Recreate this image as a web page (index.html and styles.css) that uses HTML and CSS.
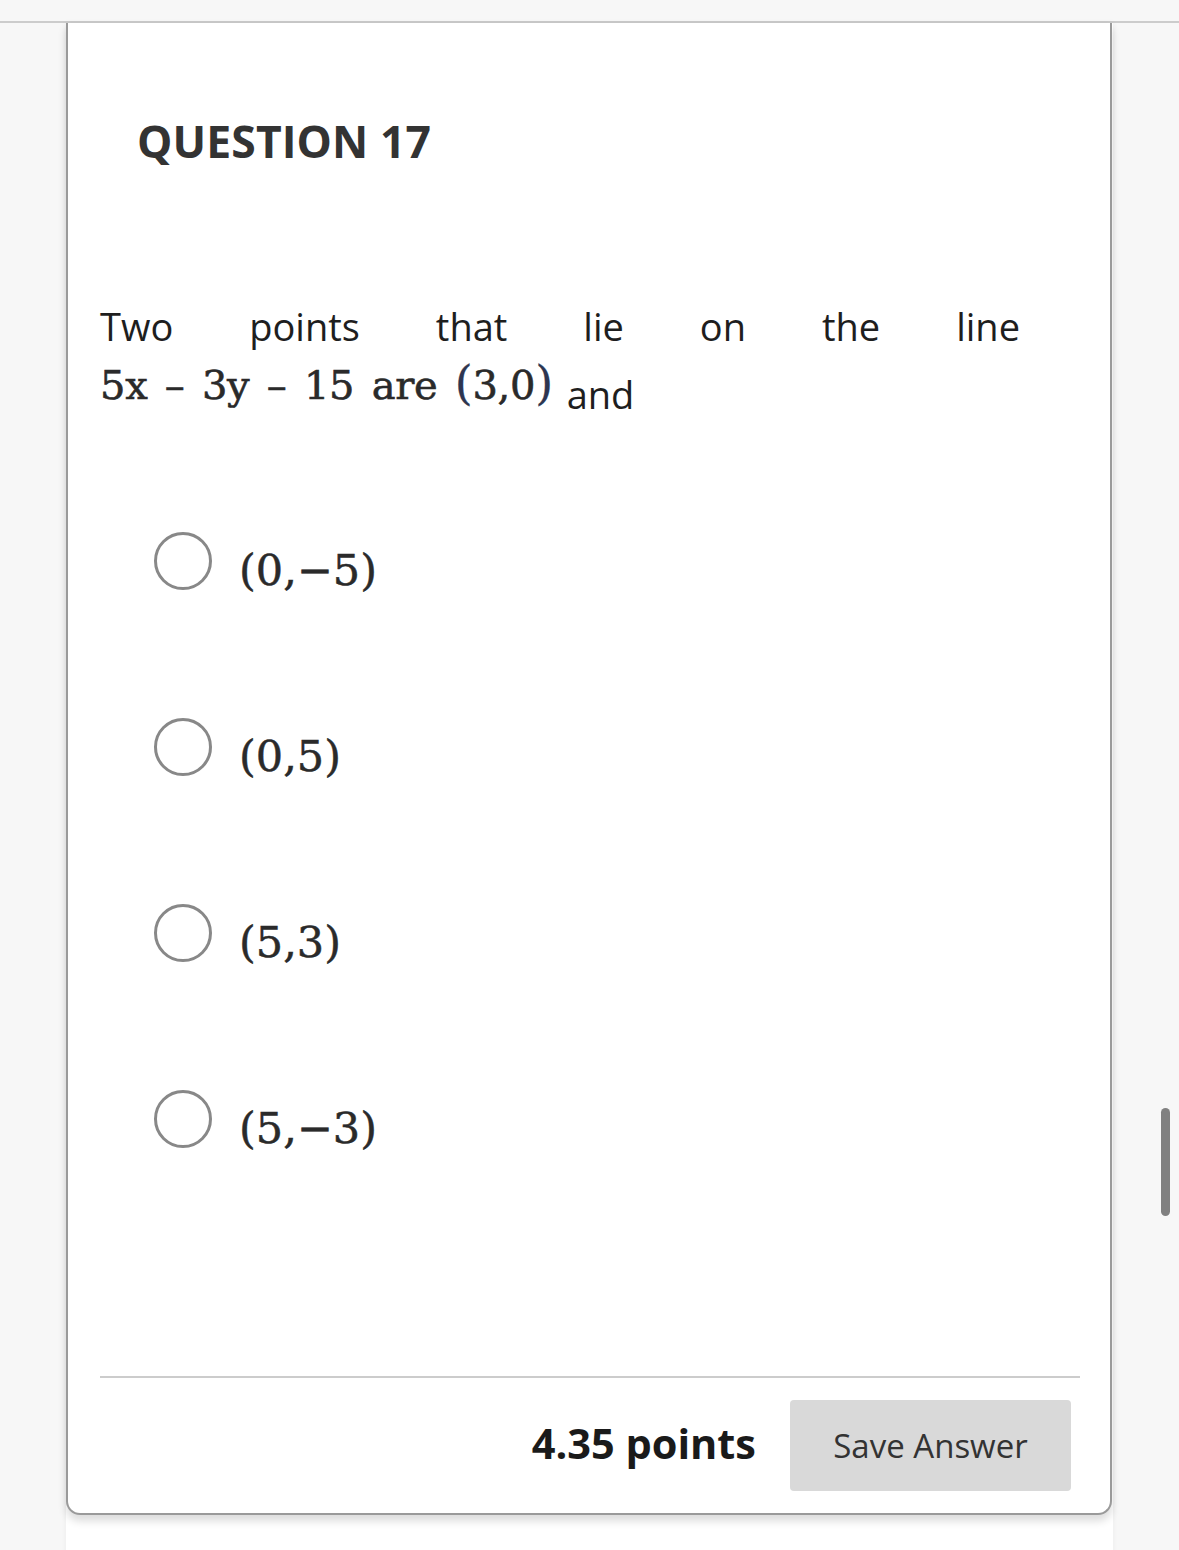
FILE: index.html
```html
<!DOCTYPE html>
<html>
<head>
<meta charset="utf-8">
<link rel="stylesheet" href="styles.css">
</head>
<body>
<div class="topbar"></div>
<main class="page">
  <section class="card">
    <h2 class="q-title">QUESTION 17</h2>
    <p class="q-text">Two points that lie on the line <span class="math">5x – 3y – 15 are <span class="paren">(</span>3,0<span class="paren">)</span></span> and</p>
    <ul class="options">
      <li class="option"><span class="radio"></span><span class="opt-math">(0,−5)</span></li>
      <li class="option"><span class="radio"></span><span class="opt-math">(0,5)</span></li>
      <li class="option"><span class="radio"></span><span class="opt-math">(5,3)</span></li>
      <li class="option"><span class="radio"></span><span class="opt-math">(5,−3)</span></li>
    </ul>
    <footer class="q-footer">
      <span class="points">4.35 points</span>
      <button class="save">Save Answer</button>
    </footer>
  </section>
</main>
<div class="scrollbar"></div>
</body>
</html>
```
FILE: styles.css
```css
html, body {
  margin: 0;
  padding: 0;
}
body {
  background: #f7f7f7;
  font-family: "Open Sans", "Liberation Sans", sans-serif;
  color: #222;
  height: 1550px;
  overflow: hidden;
}
.topbar {
  height: 21px;
  background: #f7f7f7;
  border-bottom: 2px solid #cccccc;
}
.page {
  width: 1047px;
  margin-left: 66px;
  background: #fff;
  height: 1600px;
  box-shadow: 0 0 6px rgba(0,0,0,0.05);
}
.card {
  box-sizing: border-box;
  width: 1046px;
  height: 1492px;
  background: #fff;
  border: 2px solid #9a9a9a;
  border-top: none;
  border-radius: 0 0 14px 14px;
  box-shadow: 0 6px 9px rgba(0,0,0,0.14);
  padding: 0 30px 0 32px;
  display: flex;
  flex-direction: column;
}
.q-title {
  margin: 88px 0 0 37px;
  font-size: 44.5px;
  font-weight: 700;
  color: #333;
  line-height: 60px;
  letter-spacing: 0.1px;
}
.q-text {
  margin: 121px 0 0 0;
  width: 920px;
  text-align: justify;
  font-size: 38px;
  line-height: 68px;
  color: #1e1e1e;
}
.math {
  display: inline-block;
  font-family: "DejaVu Serif", "Liberation Serif", serif;
  font-size: 40px;
  color: #2a2a2a;
  letter-spacing: -0.3px;
  word-spacing: 5px;
  white-space: nowrap;
  vertical-align: 10px;
  line-height: 40px;
  margin-right: 4px;
  -webkit-text-stroke: 0.6px #2a2a2a;
}
.paren {
  font-size: 46px;
  color: #2d3550;
  -webkit-text-stroke: 0.3px #2d3550;
}
.options {
  list-style: none;
  margin: 104px 0 0 54px;
  padding: 0;
  display: flex;
  flex-direction: column;
  gap: 128px;
}
.option {
  display: flex;
  align-items: center;
  gap: 27px;
  height: 58px;
}
.radio {
  box-sizing: border-box;
  width: 58px;
  height: 58px;
  border: 3px solid #888;
  border-radius: 50%;
  flex: none;
}
.opt-math {
  font-family: "DejaVu Serif", "Liberation Serif", serif;
  font-size: 43px;
  color: #2a2a2a;
  -webkit-text-stroke: 0.5px #2a2a2a;
  position: relative;
  top: 9px;
}
.q-footer {
  margin-top: auto;
  margin-bottom: 22px;
  border-top: 2px solid #cccccc;
  padding-top: 22px;
  display: flex;
  justify-content: flex-end;
  align-items: center;
  gap: 34px;
}
.points {
  font-size: 41.5px;
  font-weight: 700;
  color: #1a1a1a;
  position: relative;
  top: -3px;
}
.save {
  width: 281px;
  height: 91px;
  margin-right: 9px;
  background: #d9d9d9;
  border: none;
  border-radius: 4px;
  font-family: "Open Sans", "Liberation Sans", sans-serif;
  font-size: 33px;
  color: #333;
  padding: 0;
}
.scrollbar {
  position: absolute;
  left: 1161px;
  top: 1108px;
  width: 9px;
  height: 108px;
  background: #808080;
  border-radius: 5px;
}
```
